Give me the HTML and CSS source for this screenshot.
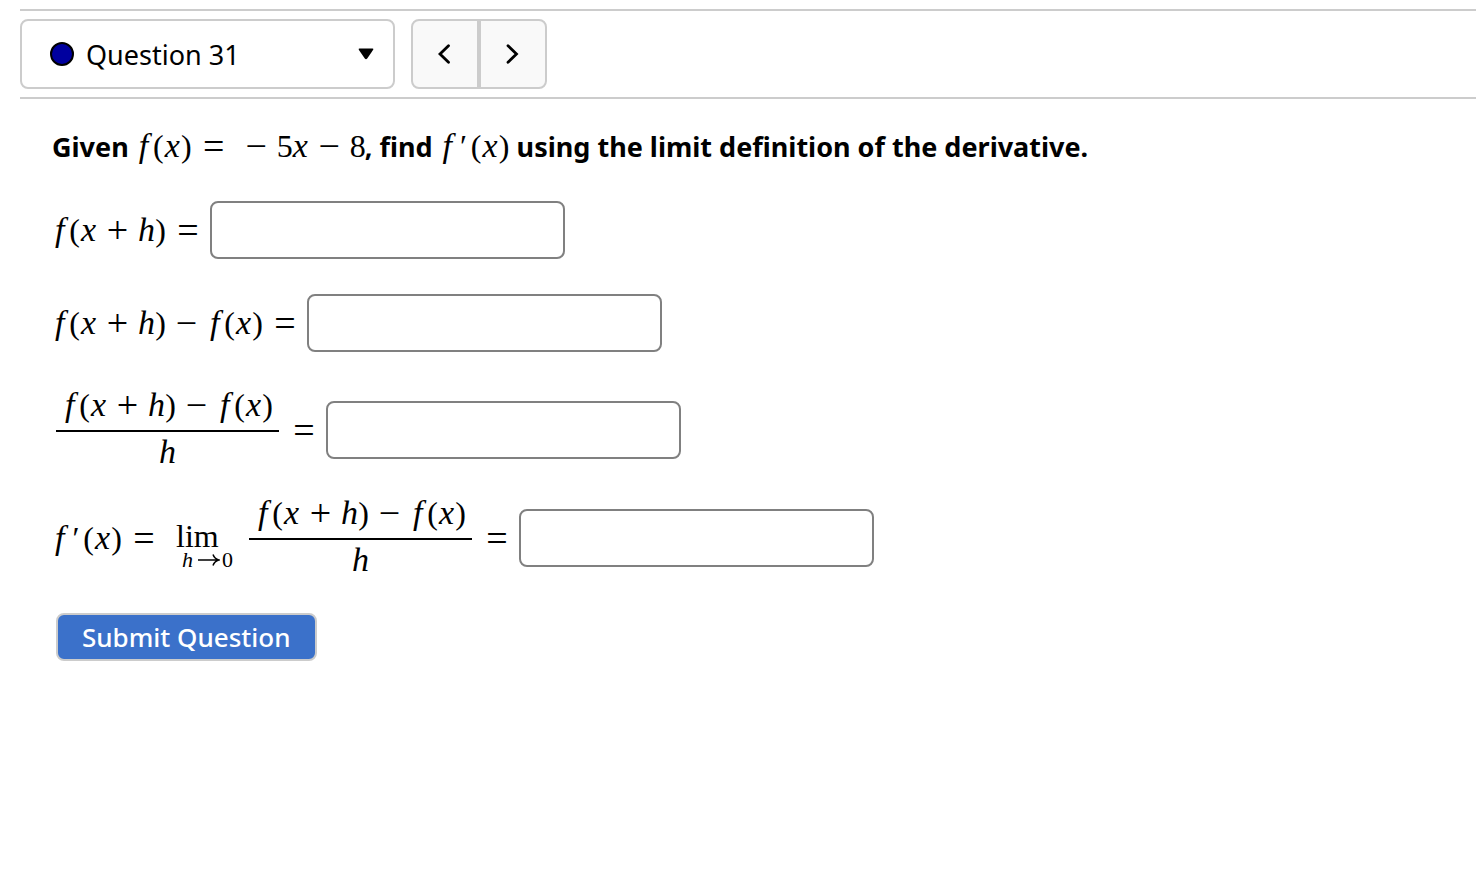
FILE: index.html
```html
<!DOCTYPE html>
<html lang="en">
<head>
    <meta charset="UTF-8">
    <meta name="viewport" content="width=device-width, initial-scale=1.0">
    <title>Question 31</title>
    <link rel="stylesheet" href="styles.css">
</head>
<body>
    <!-- Question picker and previous / next -->
    <header class="question-bar">
        <button type="button" class="picker" aria-haspopup="listbox">
            <span class="status-dot"></span>
            <span class="picker-text">Question 31</span>
            <svg class="caret" width="16" height="12" viewBox="0 0 16 12"><path d="M1.5 .5h13q1.200 0 .7 1.200L9.200 10.600q-1.200 1.400-2.400 0L.8 1.700q-.5-1.200.7-1.200z"/></svg>
        </button>
        <nav class="pager">
            <button type="button" class="prev" aria-label="Previous question">
                <svg width="14" height="22" viewBox="0 0 14 22"><path d="M10.500 2.700L2 11l8.500 8.300"/></svg>
            </button>
            <button type="button" class="next" aria-label="Next question">
                <svg width="14" height="22" viewBox="0 0 14 22"><path d="M2 2.700L10.500 11L2 19.300"/></svg>
            </button>
        </nav>
    </header>

    <form class="question">
        <p class="prompt">Given <span class="math"><i class="fn">f</i><b>(</b><i>x</i><b>)</b><span class="op eq">=</span><span class="op">−</span><span class="num">5</span><i>x</i><span class="op">−</span><span class="num">8</span></span>, find <span class="math"><i class="fn">f</i><span class="prime">′</span><b>(</b><i>x</i><b>)</b></span> using the limit definition of the derivative.</p>

        <div class="row">
            <label for="step1" class="math"><i class="fn">f</i><b>(</b><i>x</i><span class="op">+</span><i>h</i><b>)</b><span class="op eq">=</span></label>
            <input type="text" id="step1">
        </div>

        <div class="row">
            <label for="step2" class="math"><i class="fn">f</i><b>(</b><i>x</i><span class="op">+</span><i>h</i><b>)</b><span class="op">−</span><i class="fn">f</i><b>(</b><i>x</i><b>)</b><span class="op eq">=</span></label>
            <input type="text" id="step2">
        </div>

        <!-- Difference quotient -->
        <div class="row quotient">
            <label for="step3" class="math">
                <span class="frac">
                    <span class="top"><i class="fn">f</i><b>(</b><i>x</i><span class="op">+</span><i>h</i><b>)</b><span class="op">−</span><i class="fn">f</i><b>(</b><i>x</i><b>)</b></span>
                    <span class="bottom"><i>h</i></span>
                </span>
                <span class="op eq">=</span>
            </label>
            <input type="text" id="step3">
        </div>

        <!-- Limit -->
        <div class="row quotient">
            <label for="step4" class="math">
                <i class="fn">f</i><span class="prime">′</span><b>(</b><i>x</i><b>)</b><span class="op eq">=</span>
                <span class="limit">
                    <span class="lim">lim</span>
                    <span class="under"><i>h</i><svg width="22" height="14" viewBox="0 0 22 14"><path d="M0 7h20.500M15 1.500q1.500 4.300 5.800 5.500q-4.300 1.200-5.800 5.500"/></svg>0</span>
                </span>
                <span class="frac">
                    <span class="top"><i class="fn">f</i><b>(</b><i>x</i><span class="op">+</span><i>h</i><b>)</b><span class="op">−</span><i class="fn">f</i><b>(</b><i>x</i><b>)</b></span>
                    <span class="bottom"><i>h</i></span>
                </span>
                <span class="op eq">=</span>
            </label>
            <input type="text" id="step4">
        </div>

        <button type="submit" class="submit">Submit Question</button>
    </form>
</body>
</html>
```
FILE: styles.css
```css
* {
    box-sizing: border-box;
}

body {
    margin: 0;
    background: #fff;
    color: #000;
    font-family: "Lucida Grande", "Noto Sans", sans-serif;
    font-size: 27px;
}

button {
    font: inherit;
    color: inherit;
    cursor: pointer;
}

/* Question bar */
.question-bar {
    display: flex;
    gap: 16px;
    margin: 9px 0 0 20px;
    padding: 8px 0;
    border-top: 2px solid #ccc;
    border-bottom: 2px solid #ccc;
}

.picker {
    display: flex;
    align-items: center;
    gap: 12px;
    width: 375px;
    height: 70px;
    padding: 0 19px 0 28px;
    background: #fff;
    border: 2px solid #ccc;
    border-radius: 8px;
}

.status-dot {
    width: 24px;
    height: 24px;
    background: #00009f;
    border: 2px solid #000;
    border-radius: 50%;
}

.picker-text {
    flex: 1;
    text-align: left;
}

.pager {
    display: flex;
}

.pager button {
    display: flex;
    align-items: center;
    justify-content: center;
    width: 68px;
    height: 70px;
    padding: 0;
    background: #f9f9f9;
    border: 2px solid #ccc;
}

.pager .prev {
    border-radius: 8px 0 0 8px;
}

.pager .next {
    border-radius: 0 8px 8px 0;
}

.pager path {
    fill: none;
    stroke: #000;
    stroke-width: 2.8;
    stroke-linecap: round;
}

/* Question body */
.question {
    display: flex;
    flex-direction: column;
    align-items: flex-start;
    padding: 28px 52px;
}

.prompt {
    margin: 0 0 34px;
    line-height: 40px;
    font-weight: bold;
}

.row {
    display: flex;
    align-items: center;
    margin-bottom: 35px;
}

.row.quotient {
    margin-bottom: 22px;
}

.row input {
    width: 355px;
    height: 58px;
    padding: 0 12px;
    border: 2px solid #808080;
    border-radius: 8px;
    font: inherit;
}

/* Math */
.math {
    display: inline-flex;
    align-items: center;
    font-family: "Liberation Serif", serif;
    font-size: 32px;
    font-weight: normal;
    line-height: 36px;
}

.math i,
.math b {
    width: 17px;
    text-align: center;
}

.math i {
    font-size: 34px;
}

.math .fn {
    padding-left: 3px;
    text-align: left;
}

.math b {
    width: 11px;
    font-weight: normal;
}

.math .num {
    width: 15px;
    text-align: center;
}

.math .op {
    width: 41px;
    font-size: 38px;
    text-align: center;
}

.math .eq {
    width: 44px;
}

.prime {
    width: 14px;
    text-align: center;
}

.frac {
    display: flex;
    flex-direction: column;
    margin: 0 3px 0 4px;
}

.top,
.bottom {
    display: flex;
    align-items: center;
    justify-content: center;
}

.top {
    padding: 0 6px 7px;
    border-bottom: 2px solid #000;
}

.bottom {
    padding: 2px 0 3px;
}

.limit {
    display: flex;
    flex-direction: column;
    padding: 12px 12px 0 10px;
    line-height: 32px;
}

.under {
    display: flex;
    align-items: center;
    gap: 2px;
    padding-left: 6px;
    font-size: 22px;
    line-height: 16px;
}

.math .under i {
    width: 14px;
    font-size: 22px;
    text-align: left;
}

.under path {
    fill: none;
    stroke: #000;
    stroke-width: 1.5;
}

.submit {
    height: 48px;
    margin: 10px 4px;
    padding: 0 24px;
    background: #3b71ca;
    border: 2px solid #ccc;
    border-radius: 8px;
    color: #fff;
    font-size: 26px;
    font-weight: 500;
    line-height: 40px;
}
```
